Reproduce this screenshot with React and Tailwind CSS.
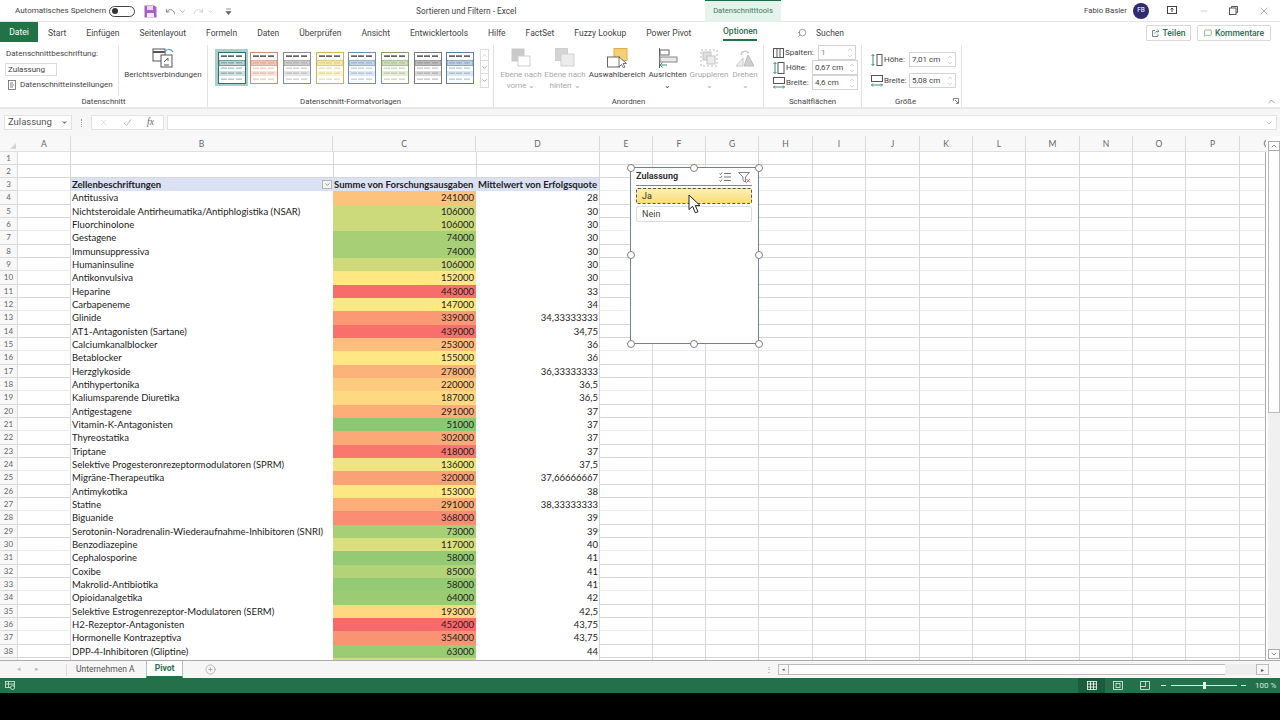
import React from "react";
import { ChevronDown, ChevronUp, CirclePlus, MessageSquare, Minus, Search, Undo, Redo, X } from "lucide-react";

const rowsData = [
  ["Antitussiva", 241000, "28"],
  ["Nichtsteroidale Antirheumatika/Antiphlogistika (NSAR)", 106000, "30"],
  ["Fluorchinolone", 106000, "30"],
  ["Gestagene", 74000, "30"],
  ["Immunsuppressiva", 74000, "30"],
  ["Humaninsuline", 106000, "30"],
  ["Antikonvulsiva", 152000, "30"],
  ["Heparine", 443000, "33"],
  ["Carbapeneme", 147000, "34"],
  ["Glinide", 339000, "34,33333333"],
  ["AT1-Antagonisten (Sartane)", 439000, "34,75"],
  ["Calciumkanalblocker", 253000, "36"],
  ["Betablocker", 155000, "36"],
  ["Herzglykoside", 278000, "36,33333333"],
  ["Antihypertonika", 220000, "36,5"],
  ["Kaliumsparende Diuretika", 187000, "36,5"],
  ["Antigestagene", 291000, "37"],
  ["Vitamin-K-Antagonisten", 51000, "37"],
  ["Thyreostatika", 302000, "37"],
  ["Triptane", 418000, "37"],
  ["Selektive Progesteronrezeptormodulatoren (SPRM)", 136000, "37,5"],
  ["Migräne-Therapeutika", 320000, "37,66666667"],
  ["Antimykotika", 153000, "38"],
  ["Statine", 291000, "38,33333333"],
  ["Biguanide", 368000, "39"],
  ["Serotonin-Noradrenalin-Wiederaufnahme-Inhibitoren (SNRI)", 73000, "39"],
  ["Benzodiazepine", 117000, "40"],
  ["Cephalosporine", 58000, "41"],
  ["Coxibe", 85000, "41"],
  ["Makrolid-Antibiotika", 58000, "41"],
  ["Opioidanalgetika", 64000, "42"],
  ["Selektive Estrogenrezeptor-Modulatoren (SERM)", 193000, "42,5"],
  ["H2-Rezeptor-Antagonisten", 452000, "43,75"],
  ["Hormonelle Kontrazeptiva", 354000, "43,75"],
  ["DPP-4-Inhibitoren (Gliptine)", 63000, "44"],
];

const restCols = [
  ["E", "w-[53px]"], ["F", "w-[53px]"], ["G", "w-[53px]"], ["H", "w-[54px]"], ["I", "w-[53px]"], ["J", "w-[54px]"],
  ["K", "w-[53px]"], ["L", "w-[53px]"], ["M", "w-[54px]"], ["N", "w-[53px]"], ["O", "w-[53px]"], ["P", "w-[54px]"], ["Q", "w-[26px]"],
];

const tabs = ["Start", "Einfügen", "Seitenlayout", "Formeln", "Daten", "Überprüfen", "Ansicht", "Entwicklertools", "Hilfe", "FactSet", "Fuzzy Lookup", "Power Pivot"];

const thumbs = [
  ["#2f6f73", "#c3d0d0", "#d5dfdf"],
  ["#c98f70", "#ecc8b6", "#f7e3d9"],
  ["#8c8c8c", "#cdcdcd", "#e4e4e4"],
  ["#c9b45a", "#f5e8ae", "#faf3d2"],
  ["#6f8fb0", "#c6d5e6", "#dee7f2"],
  ["#84a066", "#d0dec0", "#e5edda"],
  ["#7a7a7a", "#bcbcbc", "#dadada"],
  ["#5f7ea3", "#c0cfe1", "#dbe5f0"],
];

// same 3 colour scale excel uses, washed a bit like in the video
const mix = (a, b, t) => a.map((c, i) => Math.round(c + (b[i] - c) * t));
const heat = (v) => {
  const green = [140, 200, 114];
  const yellow = [255, 233, 132];
  const red = [248, 105, 107];
  const rgb = v <= 150000 ? mix(green, yellow, (v - 51000) / 99000) : mix(yellow, red, (v - 150000) / 302000);
  return `rgb(${rgb.join(",")})`;
};

function Thumb({ colors, selected }) {
  const [line, head, band] = colors;
  return (
    <div className={selected ? "w-[33px] h-[37px] bg-[#a9cfc9] flex items-center justify-center" : "w-[32.7px] h-[37px] flex items-center justify-center"}>
      <svg width="28" height="32" viewBox="0 0 28 32">
        <rect x="0.5" y="0.5" width="27" height="31" fill="#fff" stroke={line} />
        {[4, 11, 19].map((x) => <rect key={x} x={x - 1} y="3.5" width="6" height="1.2" fill="#222" />)}
        <rect x="1" y="8.5" width="26" height="5" fill={head} stroke={line} strokeWidth="0.6" />
        <rect x="1" y="19" width="26" height="5" fill={band} />
        {[10.5, 16, 21, 27].map((y) => [4, 11, 19].map((x) => <rect key={x + "-" + y} x={x - 1} y={y - 0.5} width="6" height="1.4" fill={line} opacity="0.4" />))}
      </svg>
    </div>
  );
}

function Spin({ value, w, disabled }) {
  return (
    <div className={`${w} h-[15px] bg-white border border-[#d4d4d4] flex items-center justify-between pl-[2px] pr-[2px] text-[8px] ${disabled ? "text-[#8a8a8a]" : "text-[#444]"}`}>
      <span>{value}</span>
      <span className="flex flex-col text-[#777]">
        <ChevronUp size={6} strokeWidth={1.5} />
        <ChevronDown size={6} strokeWidth={1.5} />
      </span>
    </div>
  );
}

function Group({ w, label, children, labelClass = "" }) {
  return (
    <div className={`${w} shrink-0 flex flex-col border-r border-[#e2e2e2] mt-[2px]`}>
      <div className="flex-1 min-h-0 flex">{children}</div>
      <div className={`h-[11px] leading-[11px] text-center text-[7.8px] text-[#444] ${labelClass}`}>{label}</div>
    </div>
  );
}

function BigBtn({ w, lines, gray, children }) {
  return (
    <div className={`${w} shrink-0 flex flex-col items-center text-[8px] leading-[11px] ${gray ? "text-[#a8a8a8]" : "text-[#444]"}`}>
      <div className="h-[23px] mt-[1px] shrink-0 flex items-center justify-center">{children}</div>
      {lines.map((l) => <div key={l} className="whitespace-nowrap flex items-center h-[11px]">{l}</div>)}
    </div>
  );
}

function Handle({ pos }) {
  return <div className={`absolute w-[8px] h-[8px] rounded-full bg-white border border-[#7f7f7f] ${pos}`} />;
}

function SheetRow({ n, b, c, d, bg, head, noLabel }) {
  const line = n % 3 === 0 ? "border-[#ececec]" : "border-[#d6d6d6]";
  const plain = n < 3;
  return (
    <div className="flex h-[13.33px] shrink-0 leading-[13px]">
      <div className="w-[18px] shrink-0 bg-[#f8f8f8] border-r border-b border-[#d9d9d9] text-center text-[8px] text-[#666]">{noLabel ? "" : n}</div>
      <div className={`w-[53px] shrink-0 border-r border-b border-r-[#d6d6d6] ${line}`} />
      <div className={`w-[262px] shrink-0 pl-[1px] whitespace-nowrap overflow-hidden ${plain ? `border-b ${line}` : ""} ${head ? "bg-[#d9e1f2] font-bold relative" : ""}`}>
        {b}
        {head && (
          <span className="absolute right-[1px] top-[2px] w-[10px] h-[9px] bg-[#f4f4f4] border border-[#b5b5b5] flex items-center justify-center">
            <ChevronDown size={7} strokeWidth={2} className="text-[#555]" />
          </span>
        )}
      </div>
      <div className={`w-[143px] shrink-0 whitespace-nowrap pr-[2px] ${head ? "bg-[#d9e1f2] font-bold pl-[1px]" : "text-right"} ${plain ? `border-b border-l border-l-[#d6d6d6] ${line}` : ""}`} style={bg ? { backgroundColor: bg } : undefined}>{c}</div>
      <div className={`w-[124px] shrink-0 whitespace-nowrap pr-[1px] border-r border-r-[#d6d6d6] ${head ? "bg-[#d9e1f2] font-bold pl-[1px] text-center" : "text-right"} ${plain ? `border-b border-l border-l-[#d6d6d6] ${line}` : ""}`}>{d}</div>
      {restCols.map(([name, w]) => (
        <div key={name} className={`${w} shrink-0 border-r border-b ${name === "Q" ? "border-r-[#aaaaaa]" : "border-r-[#d6d6d6]"} ${line}`} />
      ))}
    </div>
  );
}

export default function App() {
  return (
    <div className="w-[1280px] h-[720px] overflow-hidden bg-white flex flex-col text-[#333] font-['Roboto',sans-serif]">
      {/* title bar */}
      <div className="h-[22px] shrink-0 flex items-center relative border-b border-[#e4e4e4] pt-[1px] text-[8px] text-[#444]">
        <span className="ml-[15px] w-[94px] whitespace-nowrap">Automatisches Speichern</span>
        <div className="w-[26px] h-[11px] rounded-full border border-[#444] flex items-center pl-[2px]">
          <div className="w-[6px] h-[6px] rounded-full bg-[#333]" />
        </div>
        <svg className="ml-[9px]" width="13" height="13" viewBox="0 0 13 13">
          <path d="M0.5 0.5H10.5L12.5 2.5V12.5H0.5Z" fill="#a65fc9" />
          <rect x="3" y="1" width="6" height="4" fill="#e8d6f2" />
          <rect x="3" y="8" width="7" height="4.5" fill="#f3e9f8" />
        </svg>
        <Undo className="ml-[8px] text-[#555]" size={11} strokeWidth={1.4} />
        <ChevronDown className="ml-[3px] text-[#666]" size={7} />
        <Redo className="ml-[7px] text-[#bdbdbd]" size={11} strokeWidth={1.4} />
        <ChevronDown className="ml-[3px] text-[#bbb]" size={7} />
        <svg className="ml-[11px]" width="7" height="7" viewBox="0 0 7 7"><path d="M1 1H6M1 3.5H6L3.5 6.5Z" stroke="#666" fill="#666" strokeWidth="0.7" /></svg>
        <span className="absolute left-[416px] whitespace-nowrap text-[8.3px]">Sortieren und Filtern  -  Excel</span>
        <div className="absolute left-[705px] top-0 w-[76px] h-[22px] bg-[#e4f4ec] border-t border-[#1f6b43] text-center leading-[20px] text-[#3f7a5c] text-[7.6px]">Datenschnitttools</div>
        <span className="absolute left-[1084px] whitespace-nowrap text-[7.8px]">Fabio Basler</span>
        <div className="absolute left-[1133px] top-[3px] w-[16px] h-[16px] rounded-full bg-[#2f2a70] text-white text-[6.5px] flex items-center justify-center">FB</div>
        <svg className="absolute left-[1167px] top-[6px]" width="10" height="9" viewBox="0 0 10 9" fill="none" stroke="#444"><rect x="0.5" y="0.5" width="9" height="7" /><path d="M5 6V2M3.5 3.5L5 2L6.5 3.5" /></svg>
        <Minus className="absolute left-[1199px] top-[6px] text-[#888]" size={10} strokeWidth={1} />
        <svg className="absolute left-[1229px] top-[6px]" width="9" height="9" viewBox="0 0 9 9" fill="none" stroke="#555"><rect x="0.5" y="2" width="6.5" height="6.5" /><path d="M2.5 2V0.5H8.5V6.5H7" /></svg>
        <X className="absolute left-[1258px] top-[5px] text-[#555]" size={12} strokeWidth={1} />
      </div>

      {/* ribbon tabs */}
      <div className="h-[21px] shrink-0 flex items-center relative text-[8.5px] text-[#444]">
        <div className="w-[38px] h-[20px] self-start bg-[#217346] text-white flex items-center justify-center">Datei</div>
        <div className="ml-[10px] flex gap-[20px] whitespace-nowrap pt-[1px]">
          {tabs.map((t) => <span key={t}>{t}</span>)}
        </div>
        <div className="absolute left-[723px] top-0 h-[19px] flex items-center pt-[2px] font-medium text-[#2b6e4d] border-b-2 border-[#217346]">Optionen</div>
        <Search className="absolute left-[797px] top-[6px] -scale-x-100 text-[#555]" size={10} strokeWidth={1.3} />
        <span className="absolute left-[816px] pt-[1px]">Suchen</span>
        <div className="absolute left-[1146px] top-[3px] w-[45px] h-[16px] border border-[#d9d9d9] rounded-[1px] flex items-center justify-center gap-[3px] text-[#2b6e4d] font-medium">
          <svg width="8" height="8" viewBox="0 0 8 8" fill="none" stroke="#3f7a5c" strokeWidth="0.8"><path d="M3 1.5H0.5V7.5H6V5M3 4.5C3 3 4 2.2 7 2.2M5.5 0.8L7 2.2L5.5 3.6" /></svg>
          Teilen
        </div>
        <div className="absolute left-[1197px] top-[3px] w-[74px] h-[16px] border border-[#d9d9d9] rounded-[1px] flex items-center justify-center gap-[3px] text-[#2b6e4d] font-medium">
          <MessageSquare size={8} strokeWidth={1.5} />
          Kommentare
        </div>
      </div>

      {/* ribbon */}
      <div className="h-[64px] shrink-0 flex relative text-[8px] text-[#444]">
        <Group w="w-[208px]" label="Datenschnitt">
          <div className="w-[119px] shrink-0 border-r border-[#e2e2e2] pl-[5px]">
            <div className="mt-[2px] ml-[1px] h-[13px] leading-[13px] whitespace-nowrap">Datenschnittbeschriftung:</div>
            <div className="mt-[3px] w-[52px] h-[13px] leading-[12px] border border-[#dcdcdc] pl-[2px]">Zulassung</div>
            <div className="mt-[3px] flex items-center gap-[4px] ml-[3px] whitespace-nowrap">
              <svg className="shrink-0" width="8" height="10" viewBox="0 0 8 10" fill="none" stroke="#666" strokeWidth="0.8"><rect x="0.5" y="0.5" width="7" height="9" /><path d="M2 3H5M2 5H6M2 7H5" /></svg>
              Datenschnitteinstellungen
            </div>
          </div>
          <BigBtn w="w-[88px]" lines={["Berichtsverbindungen"]}>
            <svg width="22" height="21" viewBox="0 0 22 21" fill="none">
              <rect x="1" y="2" width="12" height="12" fill="#fff" stroke="#555" />
              <path d="M1 5H13" stroke="#555" strokeWidth="2" />
              <rect x="9" y="8" width="11" height="12" fill="#fff" stroke="#555" />
              <path d="M12 15L16 11M16 11V14M12 18H17" stroke="#555" />
              <path d="M13 6C13 2 19 1 21 5" stroke="#58a6c7" strokeWidth="1.2" />
            </svg>
          </BigBtn>
        </Group>

        <Group w="w-[286px]" label="Datenschnitt-Formatvorlagen">
          <div className="flex items-start pt-[4px] pl-[7px]">
            {thumbs.map((c, i) => <Thumb key={i} colors={c} selected={i === 0} />)}
            <div className="ml-[3px] w-[9px] flex flex-col border border-[#dcdcdc] text-[#666]">
              <div className="h-[11px] flex items-center justify-center border-b border-[#dcdcdc]"><ChevronUp size={7} className="text-[#bbb]" /></div>
              <div className="h-[13px] flex items-center justify-center border-b border-[#dcdcdc]"><ChevronDown size={7} /></div>
              <div className="h-[13px] flex items-center justify-center"><ChevronDown size={7} /></div>
            </div>
          </div>
        </Group>

        <Group w="w-[270px]" label="Anordnen">
          <div className="flex pl-[7px] gap-[4px]">
            <BigBtn w="w-[40px]" gray lines={["Ebene nach", "vorne ⌄"]}>
              <svg width="20" height="19" viewBox="0 0 20 19"><rect x="0.5" y="0.5" width="13" height="13" fill="#c9c9c9" /><rect x="7" y="8" width="12" height="10" fill="#fff" stroke="#cfcfcf" /></svg>
            </BigBtn>
            <BigBtn w="w-[40px]" gray lines={["Ebene nach", "hinten ⌄"]}>
              <svg width="20" height="19" viewBox="0 0 20 19"><rect x="0.5" y="0.5" width="12" height="12" fill="#d4d4d4" stroke="#cfcfcf" /><rect x="6" y="6" width="13" height="12" fill="#ececec" stroke="#cfcfcf" /></svg>
            </BigBtn>
            <BigBtn w="w-[56px]" lines={["Auswahlbereich"]}>
              <svg width="21" height="20" viewBox="0 0 21 20"><rect x="7" y="0.5" width="13" height="12" fill="#f5cf75" stroke="#e0ae45" /><rect x="0.5" y="9" width="12" height="10" fill="#fff" stroke="#666" /><path d="M12 9V19L14.5 16.5L16.5 20L18 19L16 15.5H19.5Z" fill="#fff" stroke="#555" strokeWidth="0.8" /></svg>
            </BigBtn>
            <BigBtn w="w-[37px]" lines={["Ausrichten", "⌄"]}>
              <svg width="20" height="20" viewBox="0 0 20 20" fill="none"><path d="M1.5 0V20" stroke="#666" /><rect x="2" y="2" width="9" height="5" stroke="#666" fill="#fff" /><rect x="2" y="9" width="17" height="5" stroke="#888" fill="#e8e8e8" /><path d="M9 17H2M4.5 14.5L2 17L4.5 19.5" stroke="#3f8f70" /></svg>
            </BigBtn>
            <BigBtn w="w-[38px]" gray lines={["Gruppieren", "⌄"]}>
              <svg width="18" height="18" viewBox="0 0 18 18" fill="none"><rect x="1" y="1" width="16" height="16" stroke="#bdbdbd" strokeDasharray="2 2" /><rect x="3" y="3" width="8" height="8" fill="#ddd" stroke="#c4c4c4" /><rect x="7" y="7" width="8" height="8" fill="#ececec" stroke="#c4c4c4" /></svg>
            </BigBtn>
            <BigBtn w="w-[26px]" gray lines={["Drehen", "⌄"]}>
              <svg width="20" height="18" viewBox="0 0 20 18" fill="none"><path d="M1 17L8 9L8 17Z" fill="#eee" stroke="#c9c9c9" /><path d="M13 6L19 17H9Z" fill="#cfcfcf" stroke="#bdbdbd" /><path d="M6 6C6 2 11 1 14 4" stroke="#c9c9c9" strokeWidth="1.4" /></svg>
            </BigBtn>
          </div>
        </Group>

        <Group w="w-[98px]" label="Schaltflächen">
          <div className="flex flex-col pl-[9px]">
            <div className="h-[15px] flex items-center whitespace-nowrap">
              <svg className="shrink-0" width="11" height="10" viewBox="0 0 11 10" fill="none" stroke="#555"><rect x="0.5" y="0.5" width="10" height="9" /><path d="M4 0.5V9.5M7 0.5V9.5" /></svg>
              <span className="w-[33px] ml-[1px]">Spalten:</span>
              <Spin value="1" w="w-[38px]" disabled />
            </div>
            <div className="h-[15px] flex items-center whitespace-nowrap">
              <svg className="shrink-0" width="12" height="12" viewBox="0 0 12 12" fill="none"><rect x="5" y="0.5" width="6" height="11" stroke="#555" /><path d="M2 0.5V11.5M0.5 2L2 0.5L3.5 2M0.5 10L2 11.5L3.5 10" stroke="#3f8f70" /></svg>
              <span className="w-[26px] ml-[1px]">Höhe:</span>
              <Spin value="0,67 cm" w="w-[46px]" />
            </div>
            <div className="h-[15px] flex items-center whitespace-nowrap">
              <svg className="shrink-0" width="12" height="12" viewBox="0 0 12 12" fill="none"><rect x="0.5" y="0.5" width="11" height="6" stroke="#555" /><path d="M0.5 10H11.5M2 8.5L0.5 10L2 11.5M10 8.5L11.5 10L10 11.5" stroke="#3f8f70" /></svg>
              <span className="w-[26px] ml-[1px]">Breite:</span>
              <Spin value="4,6 cm" w="w-[46px]" />
            </div>
          </div>
        </Group>

        <Group w="w-[100px]" label="Größe" labelClass="pr-[12px]">
          <div className="flex flex-col pl-[9px] pt-[7px] gap-[6px]">
            <div className="h-[15px] flex items-center whitespace-nowrap">
              <svg className="shrink-0" width="12" height="12" viewBox="0 0 12 12" fill="none"><rect x="6" y="0.5" width="5" height="11" stroke="#555" /><path d="M2 0.5V11.5M0.5 2L2 0.5L3.5 2M0.5 10L2 11.5L3.5 10" stroke="#3f8f70" /></svg>
              <span className="w-[25px] ml-[1px]">Höhe:</span>
              <Spin value="7,01 cm" w="w-[47px]" />
            </div>
            <div className="h-[15px] flex items-center whitespace-nowrap">
              <svg className="shrink-0" width="12" height="12" viewBox="0 0 12 12" fill="none"><rect x="0.5" y="0.5" width="11" height="6" stroke="#555" /><path d="M0.5 10H11.5M2 8.5L0.5 10L2 11.5M10 8.5L11.5 10L10 11.5" stroke="#3f8f70" /></svg>
              <span className="w-[25px] ml-[1px]">Breite:</span>
              <Spin value="5,08 cm" w="w-[47px]" />
            </div>
          </div>
        </Group>
        <svg className="absolute left-[953px] top-[55px]" width="6" height="6" viewBox="0 0 6 6" fill="none" stroke="#666" strokeWidth="0.8"><path d="M0.5 3V0.5H5.5V5.5H3M2 2L5 5" /></svg>
        <ChevronUp className="absolute right-[3px] bottom-[0px] text-[#555]" size={11} strokeWidth={1.3} />
      </div>

      {/* formula bar */}
      <div className="h-[29px] shrink-0 bg-[#f6f6f6] border-t-2 border-[#e8e8e8] flex items-center text-[9.5px] text-[#555]">
        <div className="ml-[4px] w-[68px] h-[15px] bg-white border border-[#e2e2e2] flex items-center justify-between px-[3px]">
          Zulassung
          <ChevronDown size={7} fill="#777" />
        </div>
        <div className="ml-[9px] w-[1px] h-[8px] border-l border-dotted border-[#999]" />
        <div className="ml-[9px] w-[73px] h-[15px] bg-white border border-[#e2e2e2] flex items-center text-[#bbb]">
          <X className="ml-[7px]" size={9} strokeWidth={1.2} />
          <svg className="ml-[15px]" width="9" height="9" viewBox="0 0 9 9" fill="none" stroke="#bbb"><path d="M1 5L3.5 7.5L8 1.5" /></svg>
          <span className="ml-[15px] italic text-[#666] font-['Liberation_Serif',serif]">fx</span>
        </div>
        <div className="ml-[3px] w-[1110px] h-[15px] bg-white border border-[#e2e2e2] flex items-center justify-end pr-[3px]">
          <ChevronDown size={8} className="text-[#aaa]" />
        </div>
      </div>

      {/* sheet */}
      <div className="h-[524px] shrink-0 flex overflow-hidden relative text-[9.5px] text-[#222] font-['Lato',sans-serif]">
        <div className="w-[1267px] shrink-0 flex flex-col relative">
          <div className="h-[15.5px] shrink-0 flex bg-[#f8f8f8] border-b border-[#e0e0e0] text-[8.5px] text-[#666] leading-[16px] text-center">
            <div className="w-[18px] shrink-0 flex items-end justify-end p-[2px]">
              <svg width="6" height="6" viewBox="0 0 6 6"><path d="M6 0V6H0Z" fill="#d4d4d4" /></svg>
            </div>
            <div className="w-[53px] shrink-0 border-r border-[#d9d9d9]">A</div>
            <div className="w-[262px] shrink-0 border-r border-[#d9d9d9]">B</div>
            <div className="w-[143px] shrink-0 border-r border-[#d9d9d9]">C</div>
            <div className="w-[124px] shrink-0 border-r border-[#d9d9d9]">D</div>
            {restCols.map(([name, w]) => (
              <div key={name} className={`${w} shrink-0 overflow-hidden ${name === "Q" ? "" : "border-r border-[#d9d9d9]"}`}>
                {name === "Q" ? <div className="w-[54px]">Q</div> : name}
              </div>
            ))}
          </div>
          <SheetRow n={1} />
          <SheetRow n={2} />
          <SheetRow n={3} head b="Zellenbeschriftungen" c="Summe von Forschungsausgaben" d="Mittelwert von Erfolgsquote" />
          {rowsData.map(([name, value, mean], i) => (
            <SheetRow key={name} n={i + 4} b={name} c={value} d={mean} bg={heat(value)} />
          ))}
          <SheetRow n={39} noLabel bg={heat(110000)} />

          {/* slicer */}
          <div className="absolute left-[630px] top-[31px] w-[129px] h-[177px] bg-white border border-[#6f7f9c] pl-[5px] pr-[6px] font-['Roboto',sans-serif]">
            <div className="h-[17px] mt-[1px] flex items-center justify-between border-b border-[#7d8797] text-[9px] font-bold text-[#333]">
              Zulassung
              <span className="flex items-center gap-[7px] pr-[1px]">
                <svg width="12" height="10" viewBox="0 0 12 10" fill="none" stroke="#666" strokeWidth="0.9"><path d="M5 1.5H12M5 5H12M5 8.5H12M0.5 1.5L1.5 2.5L3 0.5M0.5 5L1.5 6L3 4M0.5 8.5L1.5 9.5L3 7.5" /></svg>
                <svg width="13" height="11" viewBox="0 0 13 11" fill="none"><path d="M0.5 0.5H11.5L7.5 5V10L5 8.5V5Z" stroke="#777" strokeWidth="0.9" /><path d="M8.5 7L12 10.5M12 7L8.5 10.5" stroke="#d9666a" /></svg>
              </span>
            </div>
            <div className="mt-[2px] h-[16px] rounded-[2px] border border-dashed border-[#555] bg-gradient-to-b from-[#fdf0b4] to-[#f9dc72] pl-[5px] leading-[15px] text-[9px] text-[#333]">Ja</div>
            <div className="mt-[2px] h-[16px] rounded-[2px] border border-[#dcdcdc] pl-[5px] leading-[15px] text-[9px] text-[#444]">Nein</div>
            <Handle pos="-left-[4.5px] -top-[4.5px]" />
            <Handle pos="left-[59px] -top-[4.5px]" />
            <Handle pos="-right-[4.5px] -top-[4.5px]" />
            <Handle pos="-left-[4.5px] top-[83px]" />
            <Handle pos="-right-[4.5px] top-[83px]" />
            <Handle pos="-left-[4.5px] -bottom-[4.5px]" />
            <Handle pos="left-[59px] -bottom-[4.5px]" />
            <Handle pos="-right-[4.5px] -bottom-[4.5px]" />
            <svg className="absolute left-[57px] top-[26px]" width="13" height="20" viewBox="0 0 13 20">
              <path d="M1 1V15.5L4.6 12.4L7.3 18.8L10 17.7L7.3 11.6H12Z" fill="#fff" stroke="#222" strokeWidth="1" />
            </svg>
          </div>
        </div>

        {/* vertical scrollbar */}
        <div className="flex-1 flex flex-col items-center pt-[5px] pb-[1px]">
          <div className="w-[12px] h-[10px] border border-[#aaa] flex items-center justify-center">
            <ChevronUp size={8} strokeWidth={2} className="text-[#555]" />
          </div>
          <div className="w-[12px] h-[262px] border border-[#bbb] border-t-0 bg-white" />
          <div className="w-[12px] flex-1 bg-[#f0f0f0]" />
          <div className="w-[12px] h-[10px] border border-[#aaa] flex items-center justify-center">
            <ChevronDown size={8} strokeWidth={2} className="text-[#555]" />
          </div>
        </div>
      </div>

      {/* sheet tabs */}
      <div className="h-[18px] shrink-0 bg-[#f6f6f6] border-t border-[#aaa] flex items-center text-[8.5px] text-[#555]">
        <span className="ml-[17px] w-[18px] text-[#bbb] text-[7px]">◂</span>
        <span className="w-[31px] text-[#bbb] text-[7px]">▸</span>
        <div className="w-[1px] h-[12px] bg-[#ddd]" />
        <span className="ml-[9px] w-[70px] whitespace-nowrap">Unternehmen A</span>
        <div className="w-[37px] h-[17px] bg-white border-x border-[#bbb] border-b-2 border-b-[#217346] text-center font-bold text-[#2b6e4d] leading-[15px]">Pivot</div>
        <CirclePlus className="ml-[22px] text-[#777]" size={11} strokeWidth={1} />
        <span className="ml-[549px] w-[4px] text-[#888] text-[8px]">⋮</span>
        <div className="ml-[9px] w-[11px] h-[11px] border border-[#bbb] flex items-center justify-center text-[5px]">◂</div>
        <div className="w-[436px] h-[11px] bg-white border-y border-[#bbb]" />
        <div className="w-[31px] h-[11px] bg-[#eee]" />
        <div className="w-[13px] h-[11px] border border-[#bbb] flex items-center justify-center text-[6px]">▸</div>
      </div>

      {/* status bar */}
      <div className="h-[15px] shrink-0 bg-[#24704b] flex items-center text-white text-[8px]">
        <svg className="ml-[5px]" width="10" height="9" viewBox="0 0 10 9" fill="none" stroke="#d8efe3" strokeWidth="0.8"><rect x="0.5" y="0.5" width="9" height="6" /><path d="M0.5 3H9.5M3.5 0.5V6.5" /><circle cx="7.5" cy="6.5" r="2" fill="#24704b" /></svg>
        <div className="ml-[1063px] w-[27px] h-full bg-[#1c5c3c] flex items-center justify-center">
          <svg width="10" height="9" viewBox="0 0 10 9" fill="none" stroke="#fff" strokeWidth="0.8"><rect x="0.5" y="0.5" width="9" height="8" /><path d="M0.5 3H9.5M0.5 6H9.5M3.5 0.5V8.5M6.5 0.5V8.5" /></svg>
        </div>
        <svg className="ml-[8px]" width="10" height="9" viewBox="0 0 10 9" fill="none" stroke="#e6f3ec" strokeWidth="0.8"><rect x="0.5" y="0.5" width="9" height="8" /><rect x="3" y="2.5" width="4" height="4" /></svg>
        <svg className="ml-[17px]" width="10" height="9" viewBox="0 0 10 9" fill="none" stroke="#e6f3ec" strokeWidth="0.8"><path d="M0.5 0.5H9.5V8.5H0.5ZM5.5 0.5V5.5H0.5" /></svg>
        <span className="ml-[11px] w-[5px] h-[1px] bg-[#dcebe3]" />
        <div className="ml-[5px] w-[66px] h-[1px] bg-[#dcebe3] relative">
          <div className="absolute left-[32px] -top-[3px] w-[3px] h-[7px] bg-[#e6f3ec]" />
        </div>
        <span className="ml-[4px] w-[5px] h-[1px] bg-[#dcebe3]" />
        <span className="ml-[9px] whitespace-nowrap text-[#dcebe3]">100 %</span>
      </div>

      <div className="flex-1 bg-black" />
    </div>
  );
}
